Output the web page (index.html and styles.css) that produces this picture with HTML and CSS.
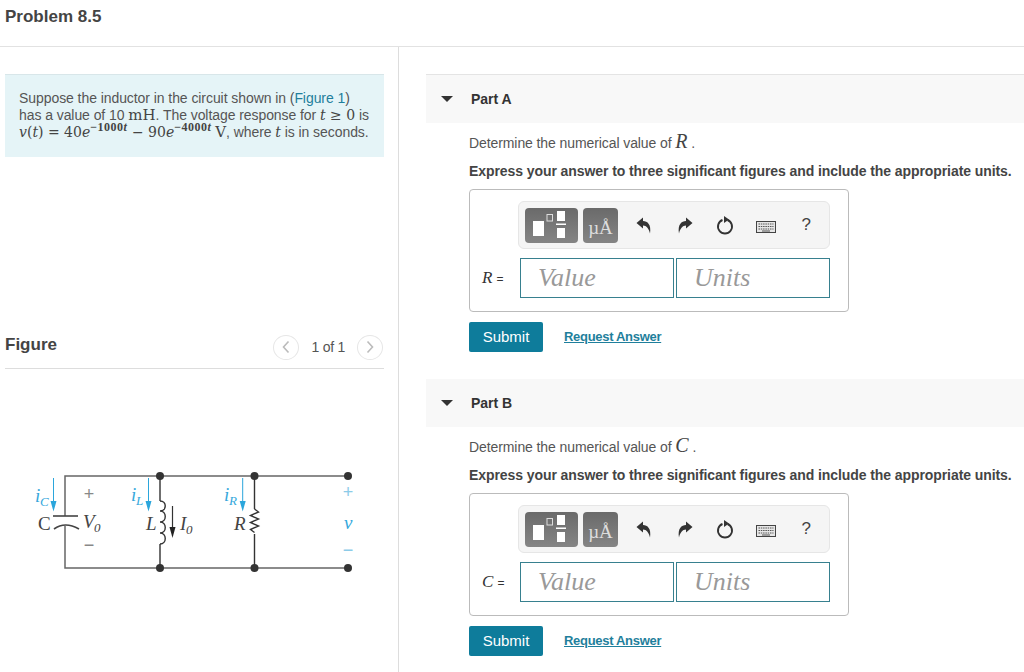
FILE: index.html
```html
<!DOCTYPE html>
<html lang="en">
<head>
    <meta charset="UTF-8">
    <title>Problem 8.5</title>
    <link rel="stylesheet" href="styles.css">
</head>
<body>

    <!-- Title -->
    <div class="title-bar">
        <h1>Problem 8.5</h1>
    </div>

    <div class="columns">

        <!-- Left column: problem text and figure -->
        <div class="left-col">
            <div class="intro">
                <p>Suppose the inductor in the circuit shown in (<a href="#">Figure 1</a>)</p>
                <p>has a value of 10 <span class="math-wide">mH</span>. The voltage response for <span class="math"><i>t</i> &ge; 0</span> is</p>
                <p><span class="math"><i>v</i>(<i>t</i>) = 40<i>e</i><sup>&minus;1000<i>t</i></sup> &minus; 90<i>e</i><sup>&minus;4000<i>t</i></sup></span> <span class="math-wide">V</span>, where <span class="math"><i>t</i></span> is in seconds.</p>
            </div>

            <div class="figure-head">
                <h2>Figure</h2>
                <div class="pager">
                    <span class="pager-btn">
                        <svg width="10" height="14" viewBox="0 0 10 14"><path d="M7.500 1.500 2.500 7l5 5.500" fill="none" stroke="#bbb" stroke-width="1.600"/></svg>
                    </span>
                    <span class="pager-text">1 of 1</span>
                    <span class="pager-btn">
                        <svg width="10" height="14" viewBox="0 0 10 14"><path d="M2.500 1.500 7.500 7l-5 5.500" fill="none" stroke="#bbb" stroke-width="1.600"/></svg>
                    </span>
                </div>
            </div>

            <!-- Circuit -->
            <svg class="circuit" width="398" height="140" viewBox="0 0 398 140">
                <g fill="none" stroke="#666" stroke-width="1.500">
                    <path d="M348 25H65V65M65 75V117H348"/>
                </g>
                <g fill="none" stroke="#333" stroke-width="1.400">
                    <path d="M160 25V50M160 93V117M254.500 25V58M254.500 83V117"/>
                    <path d="M53 65H78" stroke="#444" stroke-width="1.600"/>
                    <path d="M54 78Q65 70 79 78" stroke="#444" stroke-width="1.600"/>
                    <path d="M160 50c7 0 7 10 0 10c7 0 7 11 0 11c7 0 7 11 0 11c7 0 7 11 0 11"/>
                    <path d="M254.500 58l4 3-8 3.500 8 3.500-8 3.500 8 3.500-8 3.500 4 3"/>
                    <path d="M172.500 55V76" stroke-width="1.200"/>
                </g>
                <path d="M169.500 76h6l-3 11z" fill="#222"/>
                <g fill="#333">
                    <circle cx="160" cy="25" r="4"/>
                    <circle cx="254.500" cy="25" r="4"/>
                    <circle cx="348" cy="25" r="4"/>
                    <circle cx="160" cy="117" r="4"/>
                    <circle cx="254.500" cy="117" r="4"/>
                    <circle cx="348" cy="117" r="4"/>
                </g>
                <g stroke="#2ba6dc" stroke-width="1" fill="#2ba6dc">
                    <path d="M53.500 27V50"/>
                    <path d="M50.500 50h6l-3 10.500z" stroke="none"/>
                    <path d="M148.500 27V50"/>
                    <path d="M145.500 50h6l-3 10.500z" stroke="none"/>
                    <path d="M242.700 27V50"/>
                    <path d="M239.700 50h6l-3 10.500z" stroke="none"/>
                </g>
                <g class="c-label">
                    <text x="35" y="51" class="c-blue">i</text><text x="40" y="55" class="c-blue c-sub">C</text>
                    <text x="131" y="50" class="c-blue">i</text><text x="136" y="54" class="c-blue c-sub">L</text>
                    <text x="224" y="50" class="c-blue">i</text><text x="229" y="54" class="c-blue c-sub">R</text>
                    <text x="38" y="79" class="c-up">C</text>
                    <text x="83" y="77">V</text><text x="94" y="81" class="c-sub">0</text>
                    <text x="146" y="79">L</text>
                    <text x="180" y="79">I</text><text x="186" y="83" class="c-sub">0</text>
                    <text x="234" y="79">R</text>
                    <text x="344" y="78" class="c-blue">v</text>
                    <text x="89" y="49" class="c-up c-sign">+</text>
                    <text x="89" y="100" class="c-up c-sign">&minus;</text>
                    <text x="348" y="47" class="c-blue c-up c-sign">+</text>
                    <text x="348" y="105" class="c-blue c-up c-sign">&minus;</text>
                </g>
            </svg>
        </div>

        <!-- Right column: the two parts -->
        <div class="right-col">

            <div class="part">
                <div class="part-head">
                    <span class="caret"></span>
                    <h3>Part A</h3>
                </div>
                <div class="part-body">
                    <p class="question">Determine the numerical value of <i class="math-big">R</i> .</p>
                    <p class="express">Express your answer to three significant figures and include the appropriate units.</p>
                    <div class="answer-box">
                        <div class="toolbar">
                            <span class="tool-btn tool-wide">
                                <svg width="53" height="35" viewBox="0 0 53 35"><rect x="8" y="13" width="11" height="15" fill="#fff"/><rect x="22" y="6.500" width="5.500" height="6.500" fill="none" stroke="#ddd"/><rect x="32" y="3" width="8" height="10" fill="#fff"/><rect x="31" y="15.500" width="10" height="1.500" fill="#fff"/><rect x="32" y="20" width="8" height="10" fill="#fff"/></svg>
                            </span>
                            <span class="tool-btn tool-unit">&micro;&Aring;</span>
                            <span class="tool-icons">
                                <svg width="16" height="17" viewBox="0 0 16 17"><path d="M0.500 6 7 0.500V4C11.500 4 15.500 7.500 14 16.500 13 12 10.500 8.500 7 8.500V11.500z" fill="#333"/></svg>
                                <svg width="16" height="17" viewBox="0 0 16 17"><path d="M15.500 6 9 0.500V4C4.500 4 0.500 7.500 2 16.500 3 12 5.500 8.500 9 8.500V11.500z" fill="#333"/></svg>
                                <svg width="18" height="20" viewBox="0 0 18 20"><path d="M6.500 5A7 7 0 1 0 11.500 5" fill="none" stroke="#333" stroke-width="1.900"/><path d="M8 1 13 4.500 8 8z" fill="#333"/></svg>
                                <svg class="tool-keys" width="20" height="12" viewBox="0 0 20 12"><rect x="0.500" y="0.500" width="19" height="11" fill="#e6e6e6" stroke="#444"/><path d="M2.500 3h15M2.500 5.500h15M2.500 8h15" stroke="#555" stroke-dasharray="1.500 0.800"/><path d="M6 10h8" stroke="#555"/></svg>
                                <span class="tool-help">?</span>
                            </span>
                        </div>
                        <div class="answer-row">
                            <span class="answer-label"><i>R</i> <small>=</small></span>
                            <input class="answer-input" type="text" placeholder="Value">
                            <input class="answer-input" type="text" placeholder="Units">
                        </div>
                    </div>
                    <div class="actions">
                        <button class="submit" type="button">Submit</button>
                        <a class="request" href="#">Request Answer</a>
                    </div>
                </div>
            </div>

            <div class="part">
                <div class="part-head">
                    <span class="caret"></span>
                    <h3>Part B</h3>
                </div>
                <div class="part-body">
                    <p class="question">Determine the numerical value of <i class="math-big">C</i> .</p>
                    <p class="express">Express your answer to three significant figures and include the appropriate units.</p>
                    <div class="answer-box">
                        <div class="toolbar">
                            <span class="tool-btn tool-wide">
                                <svg width="53" height="35" viewBox="0 0 53 35"><rect x="8" y="13" width="11" height="15" fill="#fff"/><rect x="22" y="6.500" width="5.500" height="6.500" fill="none" stroke="#ddd"/><rect x="32" y="3" width="8" height="10" fill="#fff"/><rect x="31" y="15.500" width="10" height="1.500" fill="#fff"/><rect x="32" y="20" width="8" height="10" fill="#fff"/></svg>
                            </span>
                            <span class="tool-btn tool-unit">&micro;&Aring;</span>
                            <span class="tool-icons">
                                <svg width="16" height="17" viewBox="0 0 16 17"><path d="M0.500 6 7 0.500V4C11.500 4 15.500 7.500 14 16.500 13 12 10.500 8.500 7 8.500V11.500z" fill="#333"/></svg>
                                <svg width="16" height="17" viewBox="0 0 16 17"><path d="M15.500 6 9 0.500V4C4.500 4 0.500 7.500 2 16.500 3 12 5.500 8.500 9 8.500V11.500z" fill="#333"/></svg>
                                <svg width="18" height="20" viewBox="0 0 18 20"><path d="M6.500 5A7 7 0 1 0 11.500 5" fill="none" stroke="#333" stroke-width="1.900"/><path d="M8 1 13 4.500 8 8z" fill="#333"/></svg>
                                <svg class="tool-keys" width="20" height="12" viewBox="0 0 20 12"><rect x="0.500" y="0.500" width="19" height="11" fill="#e6e6e6" stroke="#444"/><path d="M2.500 3h15M2.500 5.500h15M2.500 8h15" stroke="#555" stroke-dasharray="1.500 0.800"/><path d="M6 10h8" stroke="#555"/></svg>
                                <span class="tool-help">?</span>
                            </span>
                        </div>
                        <div class="answer-row">
                            <span class="answer-label"><i>C</i> <small>=</small></span>
                            <input class="answer-input" type="text" placeholder="Value">
                            <input class="answer-input" type="text" placeholder="Units">
                        </div>
                    </div>
                    <div class="actions">
                        <button class="submit" type="button">Submit</button>
                        <a class="request" href="#">Request Answer</a>
                    </div>
                </div>
            </div>

        </div>
    </div>

</body>
</html>
```

FILE: styles.css
```css
/* Basic reset */
* {
    margin: 0;
    padding: 0;
    box-sizing: border-box;
}

html, body {
    height: 672px;
    overflow: hidden;
}

body {
    font-family: "Liberation Sans", Arial, sans-serif;
    font-size: 14px;
    letter-spacing: -0.07px;
    color: #555;
    background-color: #fff;
}

/* Title */
.title-bar {
    height: 47px;
    padding: 7px 5px 0;
    border-bottom: 1px solid #e2e2e2;
}

.title-bar h1 {
    font-size: 17px;
    line-height: 20px;
    font-weight: bold;
    letter-spacing: 0;
    color: #444;
}

.columns {
    display: flex;
    height: 625px;
}

/* Left column */
.left-col {
    width: 399px;
    flex-shrink: 0;
    padding-top: 27px;
    border-right: 1px solid #ddd;
}

.intro {
    width: 379px;
    height: 83px;
    margin-left: 5px;
    padding: 15px 14px 0;
    background-color: #e5f4f7;
    border-top: 1px solid #d8e6e9;
    line-height: 17px;
    white-space: nowrap;
}

.intro a {
    color: #1f7f9c;
    text-decoration: none;
}

.math, .math-wide {
    font-family: "DejaVu Serif", serif;
    font-size: 14px;
    line-height: 0;
    letter-spacing: 0;
    color: #444;
}

.math-wide {
    font-size: 15px;
}

.intro sup {
    font-family: "Liberation Serif", serif;
    font-size: 12px;
    font-weight: bold;
    letter-spacing: 0.5px;
    line-height: 0;
}

.figure-head {
    display: flex;
    align-items: center;
    justify-content: space-between;
    width: 379px;
    height: 50px;
    margin: 162px 0 0 5px;
    padding-bottom: 1px;
    border-bottom: 1px solid #ddd;
}

.figure-head h2 {
    margin-top: 3px;
    font-size: 17px;
    font-weight: bold;
    letter-spacing: 0;
    color: #444;
}

.pager {
    display: flex;
    align-items: center;
    gap: 12px;
    margin: 8px 1px 0 0;
    color: #555;
}

.pager-text {
    letter-spacing: -0.25px;
}

.pager-btn {
    display: flex;
    align-items: center;
    justify-content: center;
    width: 26px;
    height: 25px;
    border: 1px solid #e6e6e6;
    border-radius: 50%;
}

.circuit {
    display: block;
    margin-top: 82px;
}

.c-label text {
    font-family: "Liberation Serif", serif;
    font-style: italic;
    font-size: 19px;
    fill: #444;
}

.c-label .c-blue {
    fill: #35a8dc;
}

.c-label .c-sub {
    font-size: 13px;
}

.c-label .c-up {
    font-style: normal;
}

.c-label .c-sign {
    font-family: "Liberation Sans", sans-serif;
    font-size: 18px;
    text-anchor: middle;
    fill: #888;
}

.c-label .c-blue.c-sign {
    fill: #8ccbe8;
}

/* Right column */
.right-col {
    flex: 1;
    padding: 27px 0 0 27px;
    min-width: 0;
}

.part {
    margin-bottom: 26px;
}

.part-head {
    display: flex;
    align-items: center;
    height: 49px;
    padding-left: 15px;
    background-color: #f8f8f8;
    border-top: 1px solid #e4e4e4;
}

.part + .part .part-head {
    border-top-color: #fff;
}

.caret {
    width: 0;
    height: 0;
    border-left: 6.500px solid transparent;
    border-right: 6.500px solid transparent;
    border-top: 6.500px solid #333;
}

.part-head h3 {
    margin-left: 18px;
    font-size: 14px;
    font-weight: bold;
    letter-spacing: 0;
    color: #333;
}

.part-body {
    padding: 10px 0 0 43px;
}

.question {
    height: 22px;
    line-height: 20px;
    letter-spacing: -0.09px;
}

.math-big {
    font-family: "Liberation Serif", serif;
    font-size: 20px;
    line-height: 0;
    color: #444;
}

.express {
    height: 26px;
    margin-top: 8px;
    font-weight: bold;
    line-height: 16px;
    letter-spacing: -0.08px;
    color: #444;
    white-space: nowrap;
}

/* Answer box */
.answer-box {
    width: 380px;
    height: 123px;
    padding: 11px 18px 0 48px;
    background-color: #fff;
    border: 1px solid #bbb;
    border-radius: 4px;
}

.toolbar {
    display: flex;
    align-items: center;
    height: 48px;
    padding-left: 6px;
    background-color: #f5f5f5;
    border: 1px solid #e6e6e6;
    border-radius: 6px;
}

.tool-btn {
    display: flex;
    align-items: center;
    justify-content: center;
    height: 35px;
    color: #ddd;
    background: linear-gradient(#6a6a6a, #858585);
    border-radius: 4px;
}

.tool-wide {
    width: 53px;
    margin-right: 5px;
}

.tool-unit {
    width: 35px;
    padding-top: 5px;
    font-family: "Liberation Serif", serif;
    font-size: 19px;
    letter-spacing: 0;
}

.tool-icons {
    display: grid;
    grid-template-columns: repeat(5, 40.500px);
    justify-items: center;
    align-items: center;
    margin-left: 6px;
}

.tool-icons svg {
    display: block;
}

.tool-keys {
    margin-top: 3px;
}

.tool-help {
    font-size: 17px;
    color: #444;
}

.answer-row {
    display: flex;
    align-items: center;
    gap: 2px;
    margin-top: 9px;
    padding-left: 2px;
    position: relative;
}

.answer-label {
    position: absolute;
    left: -36px;
    font-family: "Liberation Serif", serif;
    font-size: 17px;
    color: #333;
}

.answer-label small {
    font-family: "Liberation Sans", sans-serif;
    font-size: 12px;
}

.answer-input {
    width: 154px;
    height: 40px;
    padding-left: 17px;
    font-family: "Liberation Serif", serif;
    font-size: 26px;
    font-style: italic;
    background: #fff;
    border: 1px solid #37808f;
    border-radius: 0;
    outline: none;
}

.answer-input::placeholder {
    color: #999;
    opacity: 1;
}

/* Buttons under the box */
.actions {
    display: flex;
    align-items: center;
    margin-top: 10px;
}

.submit {
    width: 74px;
    height: 30px;
    padding-bottom: 2px;
    font-family: "Liberation Sans", Arial, sans-serif;
    font-size: 15px;
    color: #fff;
    background-color: #0e7c9b;
    border: none;
    border-radius: 2px;
}

.request {
    margin: -2px 0 0 21px;
    font-size: 13px;
    font-weight: bold;
    letter-spacing: -0.3px;
    color: #1f7f9c;
}
```
